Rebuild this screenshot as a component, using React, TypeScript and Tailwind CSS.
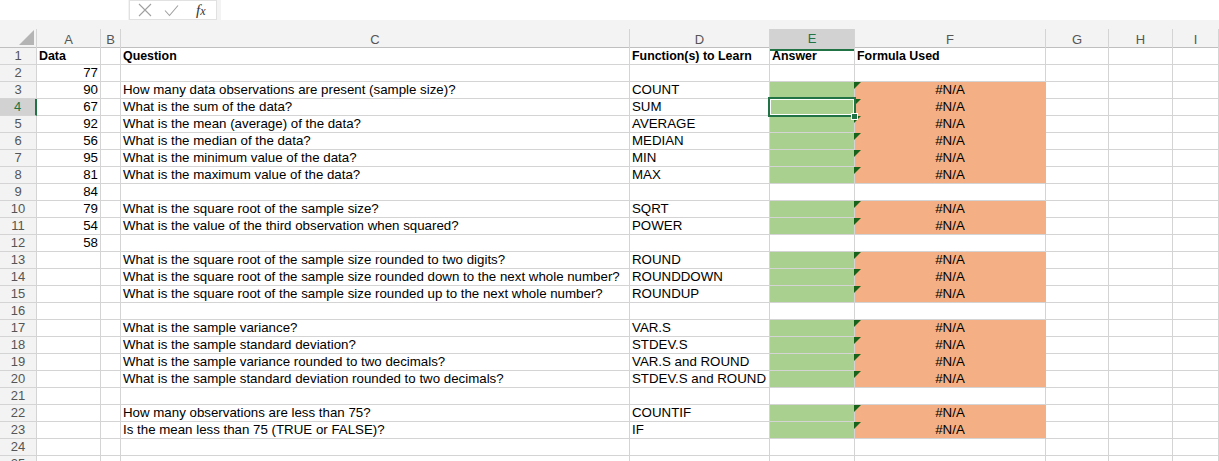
type Row = {
  a?: string;
  c?: string;
  d?: string;
  filled?: boolean;
};

const rows: Row[] = [
  { a: "77" },
  { a: "90", c: "How many data observations are present (sample size)?", d: "COUNT", filled: true },
  { a: "67", c: "What is the sum of the data?", d: "SUM", filled: true },
  { a: "92", c: "What is the mean (average) of the data?", d: "AVERAGE", filled: true },
  { a: "56", c: "What is the median of the data?", d: "MEDIAN", filled: true },
  { a: "95", c: "What is the minimum value of the data?", d: "MIN", filled: true },
  { a: "81", c: "What is the maximum value of the data?", d: "MAX", filled: true },
  { a: "84" },
  { a: "79", c: "What is the square root of the sample size?", d: "SQRT", filled: true },
  { a: "54", c: "What is the value of the third observation when squared?", d: "POWER", filled: true },
  { a: "58" },
  { c: "What is the square root of the sample size rounded to two digits?", d: "ROUND", filled: true },
  { c: "What is the square root of the sample size rounded down to the next whole number?", d: "ROUNDDOWN", filled: true },
  { c: "What is the square root of the sample size rounded up to the next whole number?", d: "ROUNDUP", filled: true },
  {},
  { c: "What is the sample variance?", d: "VAR.S", filled: true },
  { c: "What is the sample standard deviation?", d: "STDEV.S", filled: true },
  { c: "What is the sample variance rounded to two decimals?", d: "VAR.S and ROUND", filled: true },
  { c: "What is the sample standard deviation rounded to two decimals?", d: "STDEV.S and ROUND", filled: true },
  {},
  { c: "How many observations are less than 75?", d: "COUNTIF", filled: true },
  { c: "Is the mean less than 75 (TRUE or FALSE)?", d: "IF", filled: true },
  {},
  {},
];

const columns = ["A", "B", "C", "D", "E", "F", "G", "H", "I"];

const gridCols =
  "grid grid-cols-[37px_64px_20px_509px_140px_85px_191px_63px_64px_1fr]";

const cell =
  "border-r border-b border-[#d4d4d4] flex items-center px-[2px] leading-[16px] whitespace-nowrap overflow-visible";

// headers render a touch smaller than the body text
const bold = "font-bold text-[12.4px]";

function FormulaBar() {
  return (
    <div className="flex h-[20px] bg-[#f3f3f3]">
      <div className="w-[128px] bg-white" />
      <div className="ml-[1px] flex w-[88px] items-center border border-[#e1e1e1] bg-white">
        <svg className="ml-[8px]" width="14" height="14" viewBox="0 0 14 14">
          <path d="M1 1 L13 13 M13 1 L1 13" stroke="#a0a0a0" strokeWidth="1.1" fill="none" />
        </svg>
        <svg className="ml-[12px]" width="15" height="13" viewBox="0 0 15 13">
          <path d="M1 6.5 L5.5 11.5 L14 1.5" stroke="#a0a0a0" strokeWidth="1.1" fill="none" />
        </svg>
        <span className="ml-[17px] font-['Liberation_Serif',serif] text-[15px] italic leading-[16px] text-[#333]">
          f<span className="text-[12px]">x</span>
        </span>
      </div>
      <div className="ml-[4px] flex-1 bg-white" />
    </div>
  );
}

function ColumnHeaders() {
  return (
    <div className={`${gridCols} h-[19px] border-b border-[#bfbfbf] bg-[#f3f3f3] text-[13px] text-[#555]`}>
      <div className="relative border-r border-[#d4d4d4]">
        <svg className="absolute left-[19px] top-[1px]" width="16" height="16" viewBox="0 0 16 16">
          <polygon points="0,15 15,15 15,0" fill="#b4b4b4" />
        </svg>
      </div>
      {columns.map((col) =>
        col === "E" ? (
          <div
            key={col}
            className="-mb-[1px] flex items-center justify-center border-r border-b-2 border-r-[#d4d4d4] border-b-[#217346] bg-[#d2d2d2] text-[#217346]"
          >
            {col}
          </div>
        ) : (
          <div key={col} className="flex items-center justify-center border-r border-[#d4d4d4]">
            {col}
          </div>
        )
      )}
    </div>
  );
}

function Marker() {
  return (
    <svg className="absolute -left-[1px] top-0" width="7" height="7" viewBox="0 0 7 7">
      <polygon points="0,0 7,0 0,7" fill="#18631c" />
    </svg>
  );
}

export default function App() {
  const allRows: Row[] = [{}, ...rows, {}];

  return (
    <div className="h-[461px] w-[1219px] overflow-hidden bg-white font-['Liberation_Sans',Arial,sans-serif] text-[13.3px] text-black">
      <FormulaBar />
      <div className="h-[9px] bg-[#f3f3f3]" />
      <ColumnHeaders />
      <div className={`${gridCols} auto-rows-[17px]`}>
        {allRows.map((row, i) => {
          const n = i + 1;
          const isHeader = n === 1;
          const nextFilled = allRows[i + 1]?.filled;
          const fillBorder = nextFilled ? "" : " border-b-[#d4d4d4]";
          const selected = n === 4;

          return [
            <div
              key={`rh${n}`}
              className={
                selected
                  ? "flex items-center justify-center border-b border-r-2 border-b-[#d4d4d4] border-r-[#217346] bg-[#d2d2d2] text-[13px] text-[#217346]"
                  : "flex items-center justify-center border-b border-r border-[#d4d4d4] bg-[#f3f3f3] text-[13px] text-[#555]"
              }
            >
              {n}
            </div>,
            <div key={`a${n}`} className={`${cell} ${isHeader ? bold : "justify-end"}`}>
              {isHeader ? "Data" : row.a}
            </div>,
            <div key={`b${n}`} className={cell} />,
            <div key={`c${n}`} className={`${cell} ${isHeader ? bold : ""}`}>
              {isHeader ? "Question" : row.c}
            </div>,
            <div key={`d${n}`} className={`${cell} ${isHeader ? bold : ""}`}>
              {isHeader ? "Function(s) to Learn" : row.d}
            </div>,
            <div
              key={`e${n}`}
              className={`${cell} relative ${isHeader ? bold : ""} ${
                row.filled ? "border-[#a9d08e] bg-[#a9d08e]" + fillBorder : ""
              }`}
            >
              {isHeader ? "Answer" : null}
              {selected && (
                <>
                  <div className="absolute -left-[2px] -top-[2px] z-10 h-[20px] w-[88px] border-2 border-[#217346]">
                    <div className="h-full w-full border border-white" />
                  </div>
                  <div className="absolute left-[81px] top-[14px] z-20 h-[7px] w-[7px] border border-white bg-[#217346]" />
                </>
              )}
            </div>,
            <div
              key={`f${n}`}
              className={`${cell} relative ${isHeader ? bold : "justify-center"} ${
                row.filled ? "border-[#f4b084] bg-[#f4b084]" + fillBorder : ""
              }`}
            >
              {isHeader ? "Formula Used" : row.filled ? "#N/A" : null}
              {row.filled && <Marker />}
            </div>,
            <div key={`g${n}`} className={cell} />,
            <div key={`h${n}`} className={cell} />,
            <div key={`i${n}`} className={cell} />,
          ];
        })}
      </div>
    </div>
  );
}
